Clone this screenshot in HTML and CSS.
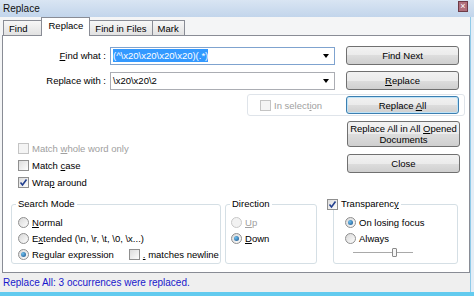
FILE: index.html
```html
<!DOCTYPE html>
<html lang="en">
<head>
  <meta charset="UTF-8">
  <title>Replace</title>
  <link rel="stylesheet" href="styles.css">
</head>
<body>
  <div class="titlebar">
    <span class="title">Replace</span>
    <span class="close-x">&#215;</span>
  </div>

  <div class="frame">
    <div class="tabs">
      <div class="tab">Find</div>
      <div class="tab tab-active">Replace</div>
      <div class="tab">Find in Files</div>
      <div class="tab">Mark</div>
    </div>

    <div class="panel">
      <div class="row row-find">
        <label class="field-label"><u>F</u>ind what :</label>
        <div class="combo combo-focus"><span class="selected-text">(^\x20\x20\x20\x20)(.*)</span><span class="arrow"></span></div>
        <button class="btn">Find Next</button>
      </div>

      <div class="row row-replace">
        <label class="field-label">Replace with :</label>
        <div class="combo"><span class="combo-text">\x20\x20\2</span><span class="arrow"></span></div>
        <button class="btn"><u>R</u>eplace</button>
      </div>

      <div class="sel-row">
        <div class="sel-box">
          <label class="check disabled"><span class="box"></span><span>In select<u>i</u>on</span></label>
          <button class="btn btn-default">Replace <u>A</u>ll</button>
        </div>
      </div>

      <div class="middle">
        <div class="options">
          <label class="check disabled"><span class="box"></span><span>Match <u>w</u>hole word only</span></label>
          <label class="check"><span class="box"></span><span>Match <u>c</u>ase</span></label>
          <label class="check"><span class="box"><svg width="9" height="9" viewBox="0 0 9 9"><path d="M1.5 4.5 L3.5 7 L7.5 1.5" fill="none" stroke="#23408f" stroke-width="1.6"/></svg></span><span>Wra<u>p</u> around</span></label>
        </div>
        <div class="side-buttons">
          <button class="btn btn-tall">Replace All in All <u>O</u>pened<br>Documents</button>
          <button class="btn">Close</button>
        </div>
      </div>

      <div class="groups">
        <fieldset class="group group-mode">
          <legend>Search Mode</legend>
          <div class="radios">
            <label class="radio"><span class="dot"></span><span><u>N</u>ormal</span></label>
            <label class="radio"><span class="dot"></span><span>E<u>x</u>tended (\n, \r, \t, \0, \x...)</span></label>
            <div class="radio-line">
              <label class="radio"><span class="dot on"></span><span>Regular expression</span></label>
              <label class="check newline"><span class="box"></span><span><u>.</u> matches newline</span></label>
            </div>
          </div>
        </fieldset>

        <fieldset class="group group-dir">
          <legend>Direction</legend>
          <div class="radios">
            <label class="radio disabled"><span class="dot"></span><span><u>U</u>p</span></label>
            <label class="radio"><span class="dot on"></span><span><u>D</u>own</span></label>
          </div>
        </fieldset>

        <fieldset class="group group-trans">
          <legend><label class="check"><span class="box"><svg width="9" height="9" viewBox="0 0 9 9"><path d="M1.5 4.5 L3.5 7 L7.5 1.5" fill="none" stroke="#23408f" stroke-width="1.6"/></svg></span><span>Transparenc<u>y</u></span></label></legend>
          <div class="radios">
            <label class="radio"><span class="dot on"></span><span>On losing focus</span></label>
            <label class="radio"><span class="dot"></span><span>Always</span></label>
            <div class="slider"><span class="track"></span><span class="thumb"></span></div>
          </div>
        </fieldset>
      </div>
    </div>

    <div class="status">Replace All: 3 occurrences were replaced.<span class="grip"></span></div>
  </div>
</body>
</html>
```

FILE: styles.css
```css
body {
  margin: 0;
  width: 474px;
  height: 296px;
  overflow: hidden;
  font-family: "Liberation Sans", Arial, sans-serif;
  font-size: 9.5px;
  color: #000;
  background: linear-gradient(to bottom, #e4edf6 292px, #63cbef 292px);
}
u {
  text-decoration: underline;
}

/* title bar */
.titlebar {
  height: 17px;
  display: flex;
  align-items: center;
  justify-content: space-between;
  background: linear-gradient(#d9e5f3, #c2d5eb);
  padding: 0 6px 0 3px;
}
.title {
  font-size: 10px;
  color: #111;
}
.close-x {
  width: 8px;
  height: 9px;
  line-height: 8px;
  text-align: center;
  font-size: 9px;
  color: #fff;
  background: #b06f7c;
  border: 1px solid #6e3b47;
  margin-top: -4px;
}

/* window body */
.frame {
  width: 470px;
  height: 275px;
  background: #f4f5f6;
  border-right: 1px solid #8fcbe9;
}

.tabs {
  height: 18px;
  display: flex;
  align-items: flex-end;
  padding-left: 3px;
}
.tab {
  height: 15px;
  line-height: 15px;
  padding: 0 5px;
  margin-left: -1px;
  border: 1px solid #898c95;
  border-bottom: none;
  background: linear-gradient(#f7f7f7, #e2e2e2);
  box-sizing: border-box;
}
.tab:first-child {
  margin-left: 0;
  padding-right: 14px;
}
.tab-active {
  height: 19px;
  line-height: 16px;
  padding: 0 6px;
  margin-bottom: -1px;
  background: #fff;
  position: relative;
  z-index: 1;
}

.panel {
  margin-left: 2px;
  width: 468px;
  height: 238px;
  box-sizing: border-box;
  border: 1px solid #898c95;
  background: #fff;
}

/* find / replace rows */
.row {
  display: flex;
  align-items: center;
  height: 19px;
}
.row-find {
  margin-top: 10px;
}
.row-replace {
  margin-top: 6px;
}
.field-label {
  width: 103px;
  text-align: right;
}
.combo {
  margin-left: 4px;
  width: 225px;
  height: 18px;
  box-sizing: border-box;
  border: 1px solid #abadb3;
  display: flex;
  align-items: center;
  padding-left: 2px;
}
.combo-focus {
  border-color: #7fa3cf;
}
.selected-text {
  background: #3399ff;
  color: #fff;
  line-height: 13px;
}
.combo-text {
  line-height: 13px;
}
.arrow {
  margin-left: auto;
  margin-right: 5px;
  width: 0;
  height: 0;
  border-left: 3px solid transparent;
  border-right: 3px solid transparent;
  border-top: 4px solid #000;
}

.btn {
  width: 113px;
  height: 19px;
  padding: 0;
  font-family: inherit;
  font-size: 9.5px;
  color: #000;
  border: 1px solid #707070;
  border-radius: 3px;
  background: linear-gradient(#f2f2f2 0%, #ebebeb 50%, #dddddd 50%, #cfcfcf 100%);
}
.row .btn {
  margin-left: 11px;
}
.btn-default {
  height: 18px;
  border-color: #3c7fb1;
  box-shadow: inset 0 0 0 1px #bfe3f7;
}
.btn-tall {
  height: 26px;
  line-height: 11px;
}

/* in selection box */
.sel-row {
  margin-top: 4px;
  padding-left: 244px;
}
.sel-box {
  width: 218px;
  height: 22px;
  box-sizing: border-box;
  border: 1px solid #dfe4ea;
  border-radius: 3px;
  display: flex;
  align-items: center;
  justify-content: space-between;
  padding: 0 5px 0 12px;
}

/* checkboxes and radios */
.check, .radio {
  display: flex;
  align-items: center;
  white-space: nowrap;
}
.box {
  width: 11px;
  height: 11px;
  box-sizing: border-box;
  border: 1px solid #8f8f8f;
  background: linear-gradient(135deg, #dcdcdc, #fdfdfd);
  margin-right: 3px;
  display: flex;
  align-items: center;
  justify-content: center;
}
.check.disabled {
  color: #a0a0a0;
}
.check.disabled .box {
  border-color: #c4c4c4;
  background: #f4f4f4;
}
.dot {
  width: 11px;
  height: 11px;
  box-sizing: border-box;
  border: 1px solid #8f8f8f;
  border-radius: 50%;
  background: linear-gradient(135deg, #d8d8d8, #fdfdfd);
  margin-right: 3px;
  display: flex;
  align-items: center;
  justify-content: center;
}
.dot.on::after {
  content: "";
  width: 5px;
  height: 5px;
  border-radius: 50%;
  background: radial-gradient(circle at 35% 35%, #6cc0f0, #1b4f86);
}
.radio.disabled {
  color: #a0a0a0;
}
.radio.disabled .dot {
  border-color: #c8c8c8;
  background: #f2f2f2;
}

/* middle part */
.middle {
  margin-top: 5px;
  display: flex;
  height: 70px;
}
.options {
  padding: 19px 0 0 15px;
}
.options .check {
  height: 17px;
}
.side-buttons {
  margin-left: auto;
  margin-right: 9px;
  display: flex;
  flex-direction: column;
  gap: 7px;
}

/* group boxes */
.groups {
  display: flex;
  margin-top: 7px;
}
.group {
  margin: 0;
  padding: 0;
  height: 66px;
  box-sizing: border-box;
  border: 1px solid #d5dfe5;
  border-radius: 3px;
  min-width: 0;
}
.group legend {
  padding: 0 2px;
  margin-left: 4px;
  line-height: 12px;
}
.group-mode {
  margin-left: 8px;
  width: 210px;
}
.group-dir {
  margin-left: 4px;
  width: 92px;
}
.group-trans {
  margin-left: 16px;
  width: 125px;
}
.group-trans legend {
  margin-left: -7px;
  padding: 0 2px 0 0;
}
.radios {
  padding: 4px 0 0 6px;
}
.radios .radio {
  height: 16px;
}
.group-dir .radios {
  padding-left: 5px;
}
.group-trans .radios {
  padding-left: 11px;
}
.radio-line {
  display: flex;
  align-items: center;
  height: 16px;
}
.newline {
  margin-left: 15px;
}

.slider {
  position: relative;
  height: 12px;
  margin-left: 8px;
  width: 60px;
  display: flex;
  align-items: center;
}
.track {
  width: 60px;
  height: 1px;
  background: #a9a9a9;
}
.thumb {
  position: absolute;
  left: 39px;
  top: 2px;
  width: 3px;
  height: 7px;
  border: 1px solid #8a8a8a;
  border-radius: 1px;
  background: #f6f6f6;
}

/* status bar */
.status {
  position: relative;
  height: 19px;
  line-height: 19px;
  padding-left: 3px;
  font-size: 10px;
  color: #1818cc;
  background: #efefef;
}
.grip {
  position: absolute;
  right: 1px;
  bottom: 2px;
  width: 7px;
  height: 7px;
  background: radial-gradient(circle, #b5b5b5 40%, transparent 45%) 0 0 / 2px 2px;
}
```
